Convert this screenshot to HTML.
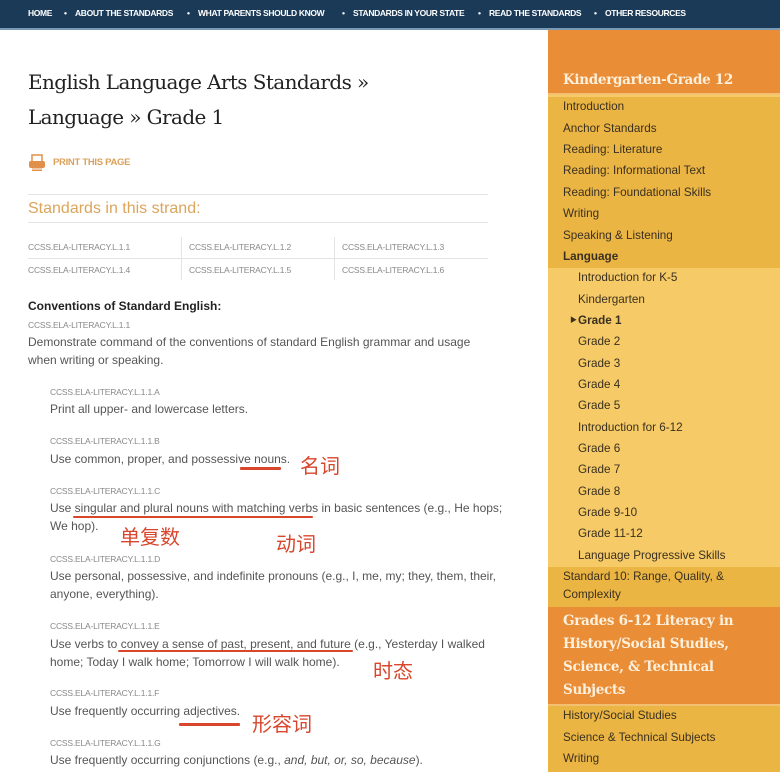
<!DOCTYPE html>
<html><head><meta charset="utf-8"><style>
*{margin:0;padding:0;box-sizing:border-box}
body{width:780px;height:772px;overflow:hidden;background:#fff;position:relative;font-family:"Liberation Sans","Noto Sans CJK SC",sans-serif;color:#444}
.a{position:absolute;white-space:nowrap;line-height:18px}
#nav{position:absolute;left:0;top:0;width:780px;height:30px;background:#1b3a58;border-bottom:2px solid #7a9ab8}
#nav span{position:absolute;top:8px;color:#fff;font-size:8.5px;font-weight:bold;letter-spacing:-0.35px}
.t{font-family:"DejaVu Serif",serif;font-size:20px;color:#222;letter-spacing:-0.6px}
.code{font-size:8.5px;color:#888;letter-spacing:-0.2px}
.txt{font-size:12px;color:#555}
.red{position:absolute;background:#d8462c;height:3px;border-radius:1px}
.cn{position:absolute;color:#d8462c;font-size:20px;font-family:"Noto Sans CJK SC",sans-serif;line-height:24px}
#side{position:absolute;left:548px;top:30px;width:232px;height:742px;background:#f6ca66}
.s{font-size:11.7px;color:#3a3020}
.sub{left:578px}
.top{left:563px}
.blk{position:absolute;left:548px;width:232px}
.hd{font-family:"DejaVu Serif",serif;color:#fdf0dc;font-weight:bold;letter-spacing:-0.3px}
</style></head><body>
<div id="nav">
<span style="left:28px">HOME</span>
<span style="left:64px">•</span>
<span style="left:75px">ABOUT THE STANDARDS</span>
<span style="left:187px">•</span>
<span style="left:198px">WHAT PARENTS SHOULD KNOW</span>
<span style="left:342px">•</span>
<span style="left:353px">STANDARDS IN YOUR STATE</span>
<span style="left:478px">•</span>
<span style="left:489px">READ THE STANDARDS</span>
<span style="left:594px">•</span>
<span style="left:605px">OTHER RESOURCES</span>
</div>

<div class="a t" style="left:28px;top:68px;line-height:28px">English Language Arts Standards »</div>
<div class="a t" style="left:28px;top:103px;line-height:28px">Language » Grade 1</div>

<svg style="position:absolute;left:28px;top:154px" width="18" height="18" viewBox="0 0 18 18"><rect x="4" y="1" width="10" height="7" fill="#fff" stroke="#e0904a" stroke-width="1.5"/><rect x="1" y="7" width="16" height="7" rx="2" fill="#e0904a"/><rect x="4" y="12" width="10" height="5" fill="#e0904a"/><line x1="4" y1="15" x2="14" y2="15" stroke="#fff" stroke-width="1"/></svg>
<div class="a" style="left:53px;top:154px;font-size:9.5px;font-weight:bold;color:#dba15a;letter-spacing:-0.3px">PRINT THIS PAGE</div>

<div style="position:absolute;left:28px;top:194px;width:460px;border-top:1px solid #e4e4e4"></div>
<div class="a" style="left:28px;top:199px;font-size:16px;color:#dca55c;line-height:20px">Standards in this strand:</div>
<div style="position:absolute;left:28px;top:222px;width:460px;border-top:1px solid #e4e4e4"></div>
<div style="position:absolute;left:28px;top:258px;width:460px;border-top:1px solid #e4e4e4"></div>
<div style="position:absolute;left:181px;top:237px;height:43px;border-left:1px solid #e4e4e4"></div>
<div style="position:absolute;left:334px;top:237px;height:43px;border-left:1px solid #e4e4e4"></div>
<div class="a code" style="left:28px;top:238px">CCSS.ELA-LITERACY.L.1.1</div>
<div class="a code" style="left:189px;top:238px">CCSS.ELA-LITERACY.L.1.2</div>
<div class="a code" style="left:342px;top:238px">CCSS.ELA-LITERACY.L.1.3</div>
<div class="a code" style="left:28px;top:261px">CCSS.ELA-LITERACY.L.1.4</div>
<div class="a code" style="left:189px;top:261px">CCSS.ELA-LITERACY.L.1.5</div>
<div class="a code" style="left:342px;top:261px">CCSS.ELA-LITERACY.L.1.6</div>

<div class="a" style="left:28px;top:297px;font-size:12px;font-weight:bold;color:#222">Conventions of Standard English:</div>
<div class="a code" style="left:28px;top:316px">CCSS.ELA-LITERACY.L.1.1</div>
<div class="a txt" style="left:28px;top:333px">Demonstrate command of the conventions of standard English grammar and usage</div>
<div class="a txt" style="left:28px;top:351px">when writing or speaking.</div>

<div class="a code" style="left:50px;top:383px">CCSS.ELA-LITERACY.L.1.1.A</div>
<div class="a txt" style="left:50px;top:400px">Print all upper- and lowercase letters.</div>
<div class="a code" style="left:50px;top:432px">CCSS.ELA-LITERACY.L.1.1.B</div>
<div class="a txt" style="left:50px;top:450px">Use common, proper, and possessive nouns.</div>
<div class="a code" style="left:50px;top:482px">CCSS.ELA-LITERACY.L.1.1.C</div>
<div class="a txt" style="left:50px;top:499px">Use singular and plural nouns with matching verbs in basic sentences (e.g., He hops;</div>
<div class="a txt" style="left:50px;top:517px">We hop).</div>
<div class="a code" style="left:50px;top:550px">CCSS.ELA-LITERACY.L.1.1.D</div>
<div class="a txt" style="left:50px;top:567px">Use personal, possessive, and indefinite pronouns (e.g., I, me, my; they, them, their,</div>
<div class="a txt" style="left:50px;top:585px">anyone, everything).</div>
<div class="a code" style="left:50px;top:617px">CCSS.ELA-LITERACY.L.1.1.E</div>
<div class="a txt" style="left:50px;top:635px">Use verbs to convey a sense of past, present, and future (e.g., Yesterday I walked</div>
<div class="a txt" style="left:50px;top:653px">home; Today I walk home; Tomorrow I will walk home).</div>
<div class="a code" style="left:50px;top:684px">CCSS.ELA-LITERACY.L.1.1.F</div>
<div class="a txt" style="left:50px;top:702px">Use frequently occurring adjectives.</div>
<div class="a code" style="left:50px;top:734px">CCSS.ELA-LITERACY.L.1.1.G</div>
<div class="a txt" style="left:50px;top:751px">Use frequently occurring conjunctions (e.g., <i>and, but, or, so, because</i>).</div>

<div class="red" style="left:240px;top:467px;width:41px"></div>
<div class="cn" style="left:300px;top:453px">名词</div>
<div class="red" style="left:73px;top:516px;width:240px;height:2px"></div>
<div class="cn" style="left:120px;top:524px">单复数</div>
<div class="cn" style="left:276px;top:531px">动词</div>
<div class="red" style="left:118px;top:650px;width:235px;height:2px"></div>
<div class="cn" style="left:373px;top:658px">时态</div>
<div class="red" style="left:179px;top:723px;width:61px"></div>
<div class="cn" style="left:252px;top:711px">形容词</div>

<div id="side"></div>
<div class="blk" style="top:30px;height:65px;background:#e98d37;border-bottom:2px solid #f2c070"></div>
<div class="a hd" style="left:563px;top:70px;font-size:13.5px;line-height:20px">Kindergarten-Grade 12</div>
<div class="blk" style="top:97px;height:171px;background:#ebb544"></div>
<div class="blk" style="top:567px;height:40px;background:#ebb544"></div>
<div class="blk" style="top:607px;height:99px;background:#e98d37;border-bottom:2px solid #f2c070"></div>
<div class="blk" style="top:706px;height:66px;background:#ebb544"></div>

<div class="a s top" style="top:98px">Introduction</div>
<div class="a s top" style="top:120px">Anchor Standards</div>
<div class="a s top" style="top:141px">Reading: Literature</div>
<div class="a s top" style="top:162px">Reading: Informational Text</div>
<div class="a s top" style="top:184px">Reading: Foundational Skills</div>
<div class="a s top" style="top:205px">Writing</div>
<div class="a s top" style="top:227px">Speaking &amp; Listening</div>
<div class="a s top" style="top:248px;font-weight:bold">Language</div>
<div class="a s sub" style="top:269px">Introduction for K-5</div>
<div class="a s sub" style="top:291px">Kindergarten</div>
<div class="a s" style="left:570px;top:312px;font-size:7px">▶</div>
<div class="a s sub" style="top:312px;font-weight:bold">Grade 1</div>
<div class="a s sub" style="top:333px">Grade 2</div>
<div class="a s sub" style="top:355px">Grade 3</div>
<div class="a s sub" style="top:376px">Grade 4</div>
<div class="a s sub" style="top:397px">Grade 5</div>
<div class="a s sub" style="top:419px">Introduction for 6-12</div>
<div class="a s sub" style="top:440px">Grade 6</div>
<div class="a s sub" style="top:461px">Grade 7</div>
<div class="a s sub" style="top:483px">Grade 8</div>
<div class="a s sub" style="top:504px">Grade 9-10</div>
<div class="a s sub" style="top:525px">Grade 11-12</div>
<div class="a s sub" style="top:547px">Language Progressive Skills</div>
<div class="a s top" style="top:568px">Standard 10: Range, Quality, &amp;</div>
<div class="a s top" style="top:586px">Complexity</div>
<div class="a hd" style="left:563px;top:610px;font-size:13.5px;line-height:23px">Grades 6-12 Literacy in<br>History/Social Studies,<br>Science, &amp; Technical<br>Subjects</div>
<div class="a s top" style="top:707px">History/Social Studies</div>
<div class="a s top" style="top:729px">Science &amp; Technical Subjects</div>
<div class="a s top" style="top:750px">Writing</div>
</body></html>
